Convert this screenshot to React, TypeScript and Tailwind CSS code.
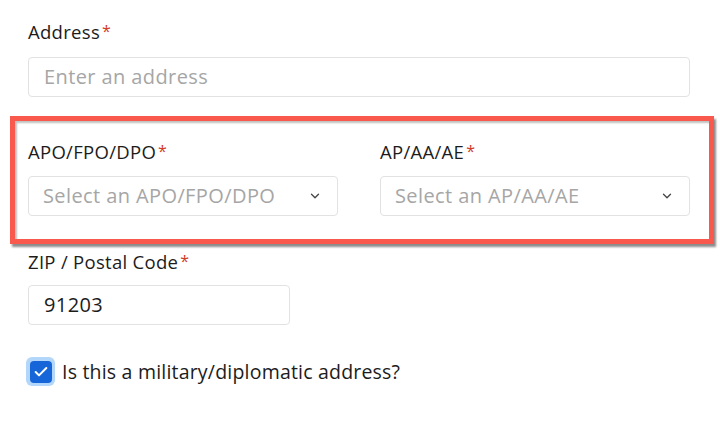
import { ChevronDown, Check } from "lucide-react";

const font = { fontFamily: '"Open Sans", "Lato", sans-serif' };

const Label = ({ text }: { text: string }) => (
  <div className="h-6 flex items-center text-[18.5px] tracking-[0.3px] leading-6 text-[#1c1c1c]">
    {text}
    <span className="ml-[2px] text-[16px] leading-none -mt-[3px] text-[#d23a1f]">*</span>
  </div>
);

const SelectBox = ({ placeholder }: { placeholder: string }) => (
  <div className="h-[40px] flex items-center justify-between border border-[#e2e2e2] rounded-[4px] pl-[14px] pr-[15px] bg-white">
    <span className="text-[20px] tracking-[0.4px] text-[#a6a6a6]">{placeholder}</span>
    <ChevronDown className="w-[14px] h-[14px] text-[#444]" strokeWidth={2.2} />
  </div>
);

export default function App() {
  return (
    <div className="w-[720px] h-[426px] bg-white overflow-hidden" style={font}>
      <div className="pl-[28px] pr-[30px] pt-[20px]">
        {/* Address */}
        <Label text="Address" />
        <div className="mt-[13px] h-[40px] flex items-center border border-[#e2e2e2] rounded-[4px] pl-[15px]">
          <span className="text-[20px] tracking-[0.4px] text-[#a6a6a6]">Enter an address</span>
        </div>

        {/* highlighted military fields */}
        <div className="mt-[19px] -ml-[18px] -mr-[24px] border-[5px] border-[#f9584c] pl-[13px] pr-[19px] pt-[19px] pb-[23px] shadow-[2px_3px_2px_rgba(0,0,0,0.45),inset_2px_2px_2px_rgba(0,0,0,0.25)]">
          <div className="grid grid-cols-2 gap-x-[42px]">
            <div>
              <Label text="APO/FPO/DPO" />
              <div className="mt-[12px]">
                <SelectBox placeholder="Select an APO/FPO/DPO" />
              </div>
            </div>
            <div>
              <Label text="AP/AA/AE" />
              <div className="mt-[12px]">
                <SelectBox placeholder="Select an AP/AA/AE" />
              </div>
            </div>
          </div>
        </div>

        {/* ZIP */}
        <div className="mt-[6px]">
          <Label text="ZIP / Postal Code" />
        </div>
        <div className="mt-[11px] w-[262px] h-[40px] flex items-center border border-[#e2e2e2] rounded-[4px] pl-[15px]">
          <span className="text-[20px] tracking-[0.4px] text-[#1c1c1c]">91203</span>
        </div>

        {/* checkbox */}
        <div className="mt-[32px] flex items-center -ml-[2px]">
          <div className="w-[29px] h-[29px] rounded-[6px] bg-[#b3d7fb] flex items-center justify-center">
            <div className="w-[22px] h-[22px] rounded-[4px] bg-[#1666d9] flex items-center justify-center">
              <Check className="w-[16px] h-[16px] text-white" strokeWidth={3} />
            </div>
          </div>
          <span className="ml-[7px] text-[19.5px] tracking-[0.2px] text-[#1c1c1c]">Is this a military/diplomatic address?</span>
        </div>
      </div>
    </div>
  );
}
